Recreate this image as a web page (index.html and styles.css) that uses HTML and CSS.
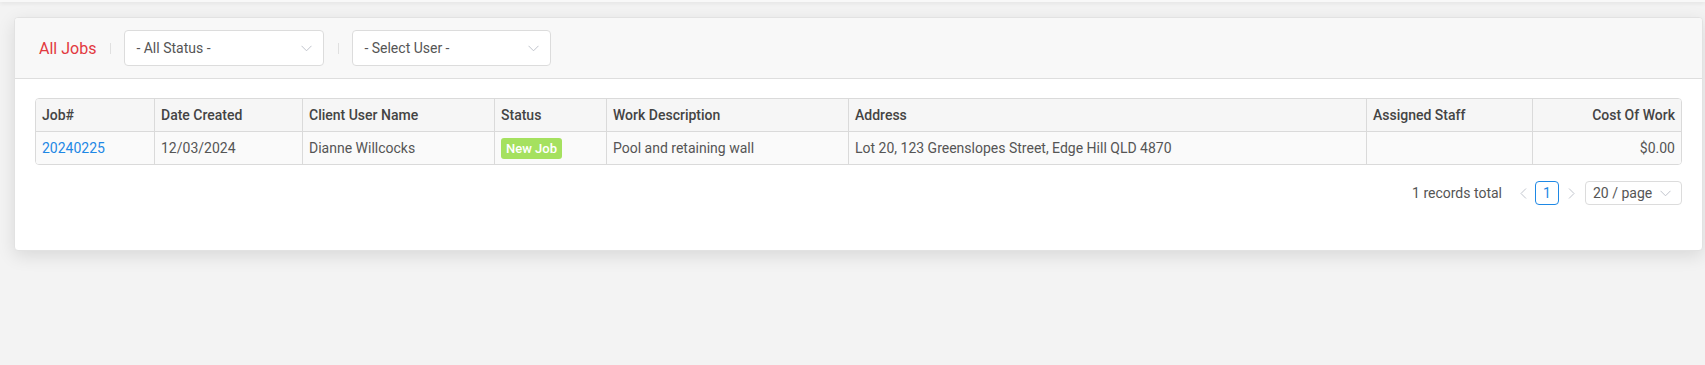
FILE: index.html
```html
<!DOCTYPE html>
<html lang="en">
<head>
<meta charset="utf-8">
<title>All Jobs</title>
<link rel="stylesheet" href="styles.css">
</head>
<body>
<div class="topbar"></div>
<div class="card">
  <div class="card-header">
    <span class="title">All Jobs</span>
    <span class="sep"></span>
    <div class="select sel-status">
      <span class="select-text">- All Status -</span>
      <svg class="chev" width="11" height="7" viewBox="0 0 11 7"><path d="M0.5 0.8 L5.5 5.8 L10.5 0.8" fill="none" stroke="#c0c4cc" stroke-width="1"/></svg>
    </div>
    <span class="sep"></span>
    <div class="select sel-user">
      <span class="select-text">- Select User -</span>
      <svg class="chev" width="11" height="7" viewBox="0 0 11 7"><path d="M0.5 0.8 L5.5 5.8 L10.5 0.8" fill="none" stroke="#c0c4cc" stroke-width="1"/></svg>
    </div>
  </div>
  <div class="card-body">
    <div class="table-wrap">
      <table class="jobs">
        <colgroup>
          <col class="c1"><col class="c2"><col class="c3"><col class="c4"><col class="c5"><col class="c6"><col class="c7"><col class="c8">
        </colgroup>
        <thead>
          <tr>
            <th>Job#</th>
            <th>Date Created</th>
            <th>Client User Name</th>
            <th>Status</th>
            <th>Work Description</th>
            <th>Address</th>
            <th>Assigned Staff</th>
            <th class="right">Cost Of Work</th>
          </tr>
        </thead>
        <tbody>
          <tr>
            <td><a class="link" href="#">20240225</a></td>
            <td>12/03/2024</td>
            <td>Dianne Willcocks</td>
            <td><span class="badge">New Job</span></td>
            <td>Pool and retaining wall</td>
            <td>Lot 20, 123 Greenslopes Street, Edge Hill QLD 4870</td>
            <td></td>
            <td class="right">$0.00</td>
          </tr>
        </tbody>
      </table>
    </div>
    <div class="pager">
      <span class="total">1 records total</span>
      <span class="pbtn disabled"><svg width="7" height="11" viewBox="0 0 7 11"><path d="M6 0.5 L1 5.5 L6 10.5" fill="none" stroke="#c0c4cc" stroke-width="1"/></svg></span>
      <span class="page active">1</span>
      <span class="pbtn"><svg width="7" height="11" viewBox="0 0 7 11"><path d="M1 0.5 L6 5.5 L1 10.5" fill="none" stroke="#c0c4cc" stroke-width="1"/></svg></span>
      <div class="size-select">
        <span>20 / page</span>
        <svg class="chev-s" width="11" height="7" viewBox="0 0 11 7"><path d="M0.5 0.8 L5.5 5.8 L10.5 0.8" fill="none" stroke="#c0c4cc" stroke-width="1"/></svg>
      </div>
    </div>
  </div>
</div>
</body>
</html>
```
FILE: styles.css
```css
html, body {
  margin: 0;
  padding: 0;
}
body {
  background: #f3f3f3;
  font-family: Roboto, "Liberation Sans", Arial, sans-serif;
  font-size: 14px;
  color: #555;
  width: 1705px;
  height: 365px;
  overflow: hidden;
}
.topbar {
  height: 2px;
  background: #f8f8f8;
  box-shadow: 0 1px 4px rgba(0, 0, 0, 0.12);
}
.card {
  margin: 15px 2px 0 14px;
  background: #fff;
  border: 1px solid #e2e2e2;
  border-radius: 4px;
  box-shadow: 0 5px 18px rgba(0, 0, 0, 0.11);
  overflow: hidden;
}
.card-header {
  height: 60px;
  background: #f8f8f8;
  border-bottom: 1px solid #dedede;
  display: flex;
  align-items: center;
  padding-left: 24px;
}
.title {
  color: #e2393f;
  font-size: 16px;
}
.sep {
  width: 1px;
  height: 11px;
  background: #e0e0e0;
  margin: 0 13px 0 14px;
}
.select {
  box-sizing: border-box;
  height: 36px;
  background: #fff;
  border: 1px solid #dcdcdc;
  border-radius: 4px;
  display: flex;
  align-items: center;
  justify-content: space-between;
  padding: 0 11px 0 11px;
  color: #555;
  font-size: 14px;
}
.sel-status { width: 200px; }
.sel-user { width: 199px; }
.card-body {
  padding: 19px 20px 20px 20px;
}
.table-wrap {
  border: 1px solid #dadada;
  border-radius: 4px;
  overflow: hidden;
}
.jobs {
  width: 100%;
  border-collapse: separate;
  border-spacing: 0;
  table-layout: fixed;
}
.c1 { width: 118px; }
.c2 { width: 148px; }
.c3 { width: 192px; }
.c4 { width: 112px; }
.c5 { width: 242px; }
.c6 { width: 518px; }
.c7 { width: 166px; }
.c8 { width: 149px; }
.jobs th, .jobs td {
  box-sizing: border-box;
  padding: 0 6px;
  text-align: left;
  white-space: nowrap;
  border-left: 1px solid #dadada;
}
.jobs th:first-child, .jobs td:first-child {
  border-left: none;
}
.jobs th {
  height: 33px;
  background: #f6f6f6;
  color: #444;
  font-weight: 500;
  border-bottom: 1px solid #dadada;
}
.jobs td {
  height: 32px;
  background: #fafafa;
  color: #555;
}
.jobs .right {
  text-align: right;
}
.link {
  color: #1e88e5;
  text-decoration: none;
}
.badge {
  display: inline-block;
  background: #a5e15f;
  color: #fff;
  font-size: 13px;
  font-weight: 500;
  line-height: 21px;
  padding: 0 5px;
  border-radius: 3px;
  vertical-align: middle;
}
.pager {
  margin-top: 16px;
  margin-bottom: 25px;
  height: 24px;
  display: flex;
  justify-content: flex-end;
  align-items: center;
}
.total {
  color: #555;
  margin-right: 9px;
}
.pbtn {
  width: 24px;
  height: 24px;
  display: flex;
  align-items: center;
  justify-content: center;
}
.page {
  box-sizing: border-box;
  width: 24px;
  height: 24px;
  border: 1px solid #1e88e5;
  border-radius: 4px;
  color: #1e88e5;
  display: flex;
  align-items: center;
  justify-content: center;
  font-size: 14px;
}
.size-select {
  box-sizing: border-box;
  margin-left: 2px;
  width: 97px;
  height: 24px;
  border: 1px solid #dcdcdc;
  border-radius: 4px;
  display: flex;
  align-items: center;
  justify-content: space-between;
  padding: 0 10px 0 7px;
  color: #555;
  background: #fff;
}
```
